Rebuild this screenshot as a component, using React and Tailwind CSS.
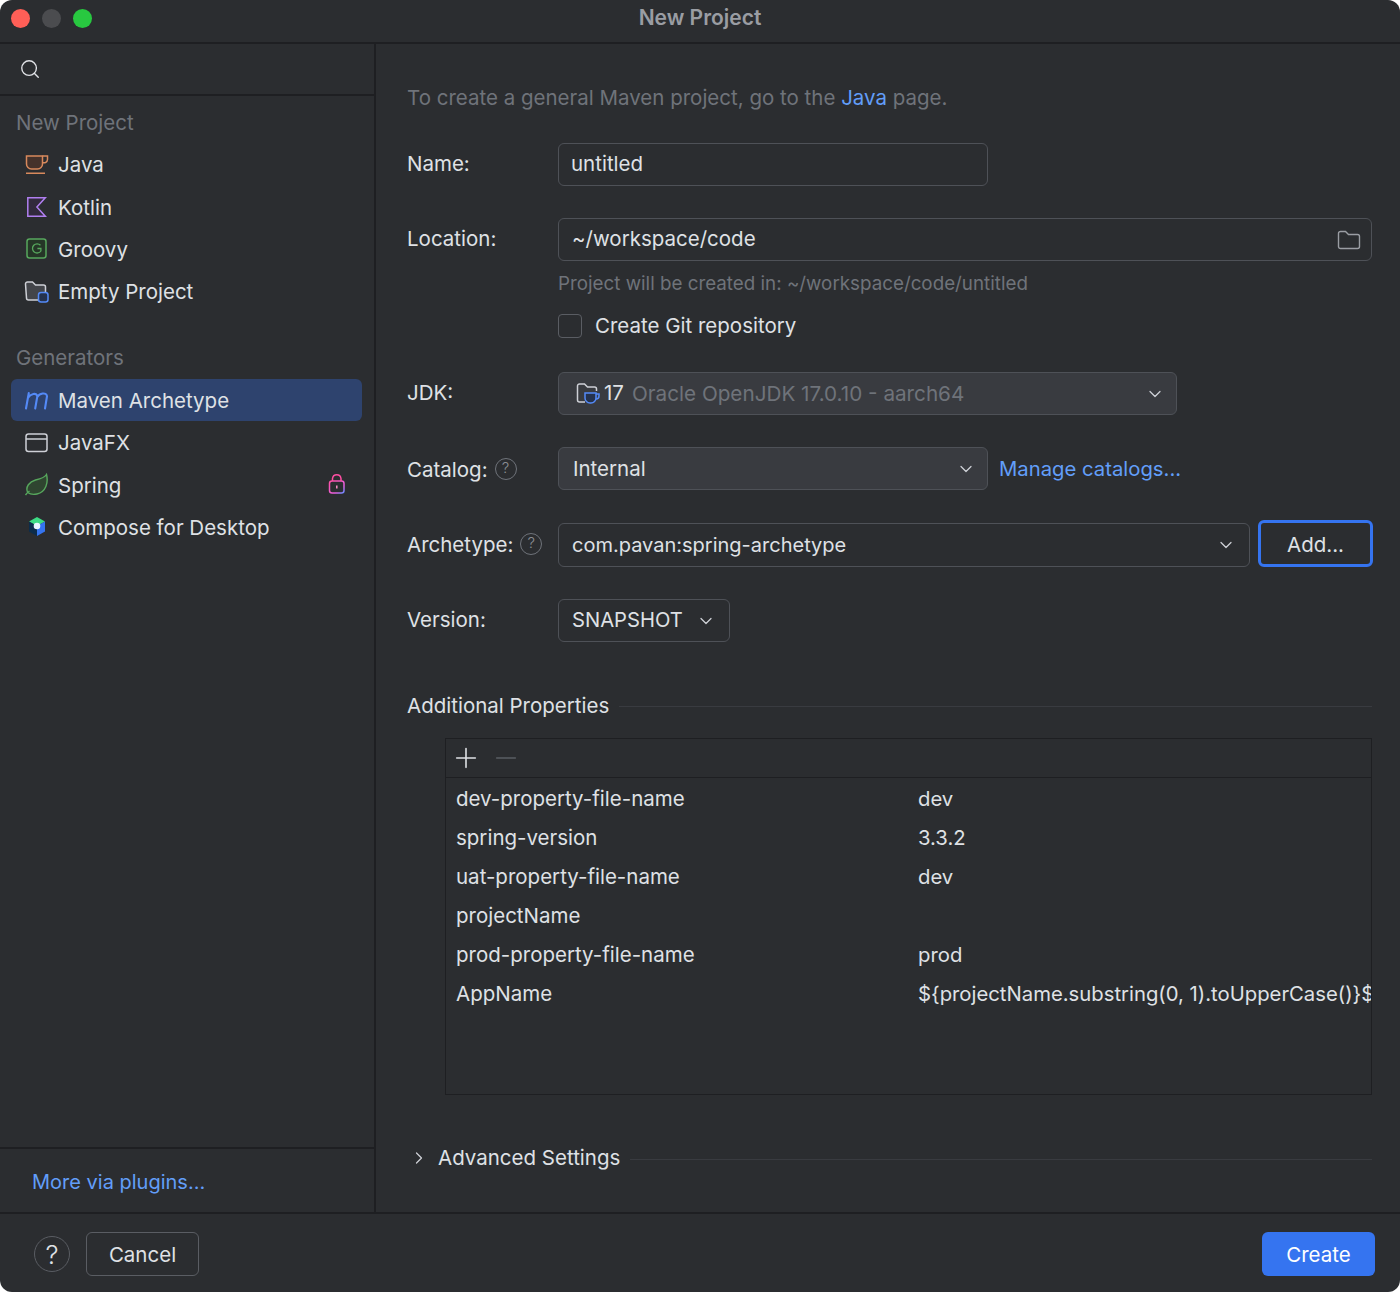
import React from 'react'
import { Search, ChevronDown, ChevronRight, Plus, Minus } from 'lucide-react'

const JavaIcon = () => (
  <svg width="26" height="22" viewBox="0 0 26 22" fill="none">
    <path d="M2.500 2h16v8a5 5 0 0 1-5 5h-6a5 5 0 0 1-5-5z" fill="#45322b" stroke="#d8895c" strokeWidth="1.500" />
    <path d="M18.500 2h5v3.500a3.500 3.500 0 0 1-5 3" stroke="#d8895c" strokeWidth="1.500" />
    <path d="M2 19.200h19" stroke="#d8895c" strokeWidth="1.600" />
  </svg>
)

const KotlinIcon = () => (
  <svg width="22" height="22" viewBox="0 0 22 22" fill="none">
    <path d="M1.800 1.800h17.500l-8.400 9.200 8.400 9.200H1.800z" fill="#322a3d" stroke="#b07ff0" strokeWidth="1.500" />
  </svg>
)

const GroovyIcon = () => (
  <svg width="22" height="22" viewBox="0 0 22 22" fill="none">
    <rect x="1" y="1" width="19" height="19" rx="2.500" fill="#253627" stroke="#57a75d" strokeWidth="1.500" />
    <path d="M14.500 7.300a4.600 4.600 0 1 0 .4 5.700v-2.500h-3.500" stroke="#57a75d" strokeWidth="1.300" />
  </svg>
)

const EmptyIcon = () => (
  <svg width="26" height="24" viewBox="0 0 26 24" fill="none">
    <path d="M1.500 4a2 2 0 0 1 2-2h5l3 3h8a2 2 0 0 1 2 2v11a2 2 0 0 1-2 2h-15a2 2 0 0 1-2-2z" fill="#43454a" stroke="#ced0d6" strokeWidth="1.500" />
    <rect x="14.500" y="12.500" width="9.500" height="9.500" rx="2.500" fill="#25324d" stroke="#548af7" strokeWidth="1.500" />
  </svg>
)

const MavenIcon = () => (
  <svg width="26" height="20" viewBox="0 0 26 20" fill="none">
    <path d="M2 18.500 4.800 3M4.300 7.500c2-3.500 8.500-5.500 9-1L11.200 18.500M13.300 7c2-3.500 9-5.500 9.700-.8L21 18.500" stroke="#548af7" strokeWidth="2.100" strokeLinecap="round" />
  </svg>
)

const JavaFxIcon = () => (
  <svg width="24" height="20" viewBox="0 0 24 20" fill="none">
    <rect x="1" y="1" width="21" height="17.500" rx="2.500" stroke="#ced0d6" strokeWidth="1.500" />
    <path d="M1 6h21" stroke="#ced0d6" strokeWidth="1.500" />
  </svg>
)

const SpringIcon = () => (
  <svg width="26" height="24" viewBox="0 0 26 24" fill="none">
    <path d="M22.500 1.500c2 8-.5 17.500-9.500 19.500-3.500.7-7 .3-9.300-1.500C1 14 5.500 8.500 11.500 7 16 6 20.500 5 22.500 1.500z" fill="#2f4530" stroke="#57a75d" strokeWidth="1.400" />
    <path d="M1.500 22C3 20 4 19 5.500 18" stroke="#57a75d" strokeWidth="1.400" />
  </svg>
)

const ComposeIcon = () => (
  <svg width="20" height="22" viewBox="0 0 20 22" fill="none">
    <path d="M10 1 18 5.500 10 10 2 5.500z" fill="#3ddc84" />
    <path d="M2 5.500 10 10v10L2 15.500z" fill="#0c2c4b" />
    <path d="M18 5.500 10 10v10l8-4.500z" fill="#3574f0" />
    <circle cx="10" cy="10" r="3.300" fill="#e8f4ff" />
  </svg>
)

const LockIcon = () => (
  <svg width="18" height="22" viewBox="0 0 18 22" fill="none">
    <defs>
      <linearGradient id="lockGrad" x1="0" y1="0" x2="1" y2="1">
        <stop offset="0" stopColor="#ff4fa3" />
        <stop offset="0.700" stopColor="#e860e0" />
        <stop offset="1" stopColor="#5f8cff" />
      </linearGradient>
    </defs>
    <rect x="1.500" y="8" width="14.500" height="12" rx="2.500" stroke="url(#lockGrad)" strokeWidth="1.500" />
    <path d="M4.500 8V5.500a4.300 4.300 0 0 1 8.500 0V8" stroke="#ff4fa3" strokeWidth="1.500" />
    <path d="M8.800 12.500v3" stroke="#ff8fc8" strokeWidth="1.500" />
  </svg>
)

const FolderIcon = () => (
  <svg width="24" height="20" viewBox="0 0 24 20" fill="none">
    <path d="M1.500 3.500a2 2 0 0 1 2-2h5l3 3h9a2 2 0 0 1 2 2v10a2 2 0 0 1-2 2h-17a2 2 0 0 1-2-2z" stroke="#9a9da3" strokeWidth="1.400" />
  </svg>
)

const JdkIcon = () => (
  <svg width="26" height="24" viewBox="0 0 26 24" fill="none">
    <path d="M1.500 4a2 2 0 0 1 2-2h5l3 3h7a2 2 0 0 1 2 2v2M9 20H3.500a2 2 0 0 1-2-2V4" stroke="#ced0d6" strokeWidth="1.500" />
    <path d="M9 11h11v5a5 5 0 0 1-5 5h-1a5 5 0 0 1-5-5z" fill="#25324d" stroke="#548af7" strokeWidth="1.500" />
    <path d="M20 12h3v2a3 3 0 0 1-3 3" stroke="#548af7" strokeWidth="1.500" />
  </svg>
)

const HelpDot = () => (
  <span className="w-[22px] h-[22px] rounded-full border border-[#6f737a] text-[#8a8d93] text-[15px] font-light flex items-center justify-center">?</span>
)

const NavItem = ({ icon, label, active, right }) => (
  <div className={`h-[42.4px] flex items-center rounded-md ${active ? 'bg-[#2e436e]' : ''}`}>
    <span className="w-[47px] flex justify-center pl-[4px] pt-[1px] shrink-0">{icon}</span>
    <span className="text-[#dfe1e5] pt-[3px]">{label}</span>
    {right && <span className="ml-auto mr-[16px] -mt-[1px]">{right}</span>}
  </div>
)

const Row = ({ label, help, className, children }) => (
  <div className={`flex items-center ${className}`}>
    <div className="w-[151px] shrink-0 flex items-center gap-[7px] text-[#dfe1e5]">
      <span className={help ? 'pt-[3px]' : ''}>{label}</span>
      {help && <HelpDot />}
    </div>
    {children}
  </div>
)

const props = [
  ['dev-property-file-name', 'dev'],
  ['spring-version', '3.3.2'],
  ['uat-property-file-name', 'dev'],
  ['projectName', ''],
  ['prod-property-file-name', 'prod'],
  ['AppName', '${projectName.substring(0, 1).toUpperCase()}$'],
]

export default function App() {
  return (
    <div className="w-[1400px] h-[1292px] bg-[#2b2d30] flex flex-col overflow-hidden rounded-[12px] text-[20.5px] font-['Inter',sans-serif]">
      {/* Title bar */}
      <div className="h-[44px] shrink-0 relative flex items-center justify-center pb-[6px] border-b-2 border-[#1e1f22]">
        <div className="absolute left-[11px] top-[9px] flex gap-[12px]">
          <span className="w-[19px] h-[19px] rounded-full bg-[#ff5f57]" />
          <span className="w-[19px] h-[19px] rounded-full bg-[#4b4c4f]" />
          <span className="w-[19px] h-[19px] rounded-full bg-[#28c840]" />
        </div>
        <span className="text-[21px] font-semibold text-[#9a9da3]">New Project</span>
      </div>

      <div className="flex-1 flex min-h-0">
        {/* Sidebar */}
        <aside className="w-[376px] shrink-0 border-r-2 border-[#1e1f22] flex flex-col">
          <div className="h-[52px] shrink-0 border-b-2 border-[#1e1f22] flex items-center pl-[19px]">
            <Search size={22} strokeWidth={1.500} className="text-[#dfe1e5]" />
          </div>
          <div className="flex-1 pt-[5px] pl-[11px] pr-[12px]">
            <div className="h-[42px] flex items-center pl-[5px] pt-[2px] text-[#6f737a]">New Project</div>
            <NavItem icon={<JavaIcon />} label="Java" />
            <NavItem icon={<KotlinIcon />} label="Kotlin" />
            <NavItem icon={<GroovyIcon />} label="Groovy" />
            <NavItem icon={<EmptyIcon />} label="Empty Project" />
            <div className="h-[42px] mt-[24px] flex items-center pl-[5px] pt-[2px] text-[#6f737a]">Generators</div>
            <NavItem icon={<MavenIcon />} label="Maven Archetype" active />
            <NavItem icon={<JavaFxIcon />} label="JavaFX" />
            <NavItem icon={<SpringIcon />} label="Spring" right={<LockIcon />} />
            <NavItem icon={<ComposeIcon />} label="Compose for Desktop" />
          </div>
          <div className="h-[65px] shrink-0 border-t-2 border-[#1e1f22] flex items-center pl-[32px] pt-[2px] text-[20px] text-[#629ef9]">
            More via plugins...
          </div>
        </aside>

        {/* Form */}
        <main className="flex-1 min-w-0 pl-[31px] pr-[28px] pt-[38px]">
          <div className="h-[32px] flex items-center text-[#6f737a]">
            To create a general Maven project, go to the&nbsp;<span className="text-[#629ef9]">Java</span>&nbsp;page.
          </div>

          <Row label="Name:" className="mt-[29px]">
            <div className="w-[430px] h-[43px] rounded-md border border-[#4e5157] flex items-center px-[12px] text-[#dfe1e5]">untitled</div>
          </Row>

          <Row label="Location:" className="mt-[32px]">
            <div className="flex-1 h-[43px] rounded-md border border-[#4e5157] flex items-center justify-between pl-[13px] pr-[10px] text-[#dfe1e5]">
              ~/workspace/code
              <FolderIcon />
            </div>
          </Row>

          <div className="ml-[151px] h-[22px] mt-[11px] pt-[2px] flex items-center text-[18.800px] text-[#6f737a]">
            Project will be created in: ~/workspace/code/untitled
          </div>

          <div className="ml-[151px] h-[24px] mt-[20px] flex items-center gap-[13px] text-[#dfe1e5]">
            <span className="w-[24px] h-[24px] rounded border border-[#5a5d63]" />
            Create Git repository
          </div>

          <Row label="JDK:" className="mt-[34px]">
            <div className="w-[619px] h-[43px] rounded-md border border-[#4e5157] bg-[#393b40] flex items-center pl-[17px] pr-[11px]">
              <JdkIcon />
              <span className="text-[#dfe1e5] ml-[2px]">17</span>
              <span className="text-[#6f737a] ml-[8px] text-[20.700px]">Oracle OpenJDK 17.0.10 - aarch64</span>
              <ChevronDown size={20} strokeWidth={1.500} className="ml-auto text-[#ced0d6]" />
            </div>
          </Row>

          <Row label="Catalog:" help className="mt-[32px]">
            <div className="w-[430px] h-[43px] rounded-md border border-[#4e5157] bg-[#393b40] flex items-center pl-[14px] pr-[11px] text-[#dfe1e5]">
              <span className="pt-[2px]">Internal</span>
              <ChevronDown size={20} strokeWidth={1.500} className="ml-auto text-[#ced0d6]" />
            </div>
            <span className="ml-[11px] pt-[2px] text-[20.300px] text-[#629ef9]">Manage catalogs...</span>
          </Row>

          <Row label="Archetype:" help className="mt-[30px]">
            <div className="flex-1 h-[44px] self-end rounded-md border border-[#4e5157] flex items-center pl-[13px] pr-[13px] text-[#dfe1e5]">
              <span className="text-[20px]">com.pavan:spring-archetype</span>
              <ChevronDown size={20} strokeWidth={1.500} className="ml-auto text-[#ced0d6]" />
            </div>
            <div className="w-[115px] h-[47px] ml-[8px] -mr-[1px] pt-[3px] rounded-md border-[3px] border-[#3574f0] flex items-center justify-center text-[#dfe1e5]">Add...</div>
          </Row>

          <Row label="Version:" className="mt-[32px]">
            <div className="w-[172px] h-[43px] rounded-md border border-[#4e5157] flex items-center pl-[13px] pr-[13px] text-[#dfe1e5]">
              <span className="text-[20.200px]">SNAPSHOT</span>
              <ChevronDown size={20} strokeWidth={1.500} className="ml-auto text-[#ced0d6]" />
            </div>
          </Row>

          <div className="mt-[48px] h-[30px] flex items-center gap-[10px] text-[#dfe1e5]">
            <span className="pt-[2px]">Additional Properties</span>
            <div className="flex-1 h-px bg-[#393b40] mt-[3px]" />
          </div>

          <div className="ml-[38px] mt-[18px] h-[357px] border border-[#1e1f22] flex flex-col">
            <div className="h-[39px] shrink-0 border-b border-[#1e1f22] flex items-center pl-[4px] pb-[1px] gap-[8px]">
              <Plus size={32} strokeWidth={1.200} className="text-[#dfe1e5]" />
              <Minus size={32} strokeWidth={1.200} className="text-[#5a5d63]" />
            </div>
            {props.map(([k, v]) => (
              <div key={k} className="h-[39px] shrink-0 flex items-center pl-[10px] pt-[3px] text-[#dfe1e5] overflow-hidden whitespace-nowrap">
                <span className="w-[462px] shrink-0">{k}</span>
                <span className="text-[20.300px]">{v}</span>
              </div>
            ))}
          </div>

          <div className="mt-[48px] h-[30px] flex items-center text-[#dfe1e5]">
            <ChevronRight size={20} strokeWidth={1.500} className="text-[#ced0d6] ml-[2px] mr-[9px]" />
            <span className="pt-[1px]">Advanced Settings</span>
            <div className="flex-1 h-px bg-[#393b40] ml-[10px] mt-[3px]" />
          </div>
        </main>
      </div>

      {/* Footer */}
      <footer className="h-[80px] shrink-0 border-t-2 border-[#1e1f22] flex items-center pl-[34px] pr-[25px] pt-[2px]">
        <span className="w-[36px] h-[36px] rounded-full border border-[#5a5d63] flex items-center justify-center text-[#dfe1e5] text-[26px] font-light">?</span>
        <div className="ml-[16px] w-[113px] h-[44px] pt-[3px] rounded-md border border-[#5a5d63] flex items-center justify-center text-[#dfe1e5]">Cancel</div>
        <div className="ml-auto w-[113px] h-[44px] pt-[3px] rounded-md bg-[#3574f0] flex items-center justify-center text-white">Create</div>
      </footer>
    </div>
  )
}
